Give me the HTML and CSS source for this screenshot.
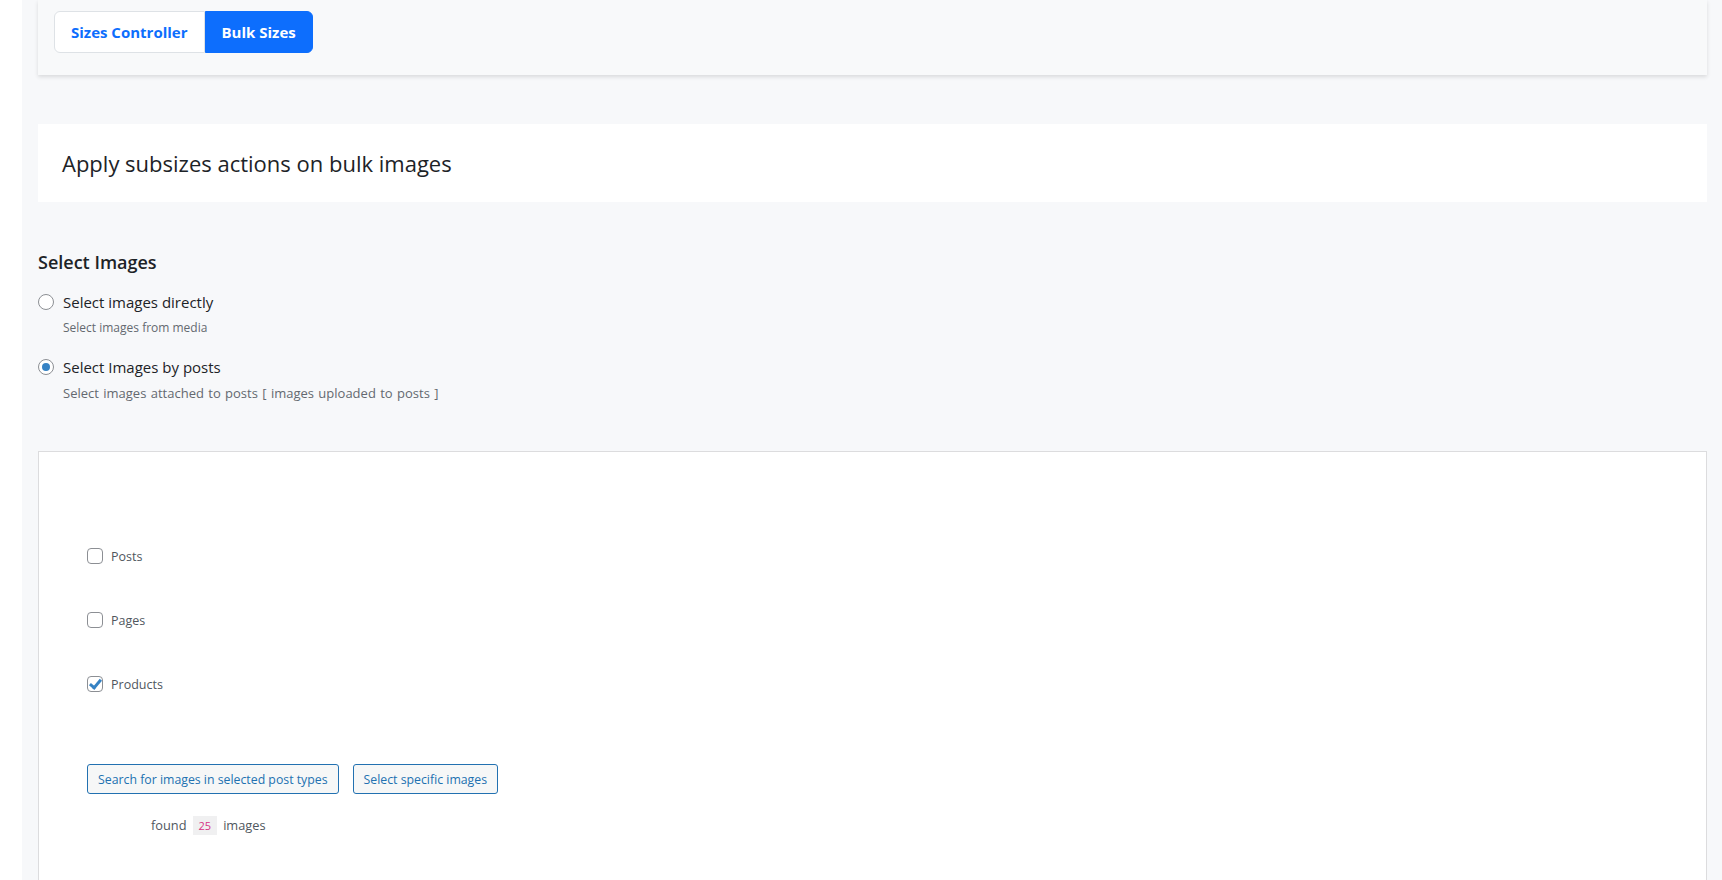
FILE: index.html
```html
<!DOCTYPE html>
<html lang="en">
<head>
    <meta charset="UTF-8">
    <meta name="viewport" content="width=device-width, initial-scale=1.0">
    <title>Bulk Sizes</title>
    <link rel="stylesheet" href="styles.css">
</head>
<body>
    <div class="wrap">
        <div class="topbar">
            <div class="tabs">
                <button class="tab">Sizes Controller</button>
                <button class="tab active">Bulk Sizes</button>
            </div>
        </div>

        <div class="title-card">
            <h2>Apply subsizes actions on bulk images</h2>
        </div>

        <div class="select-images">
            <h3>Select Images</h3>
            <label class="radio-row"><input type="radio" name="source"> Select images directly</label>
            <p class="hint">Select images from media</p>
            <label class="radio-row second"><input type="radio" name="source" checked> Select Images by posts</label>
            <p class="hint wide">Select images attached to posts [ images uploaded to posts ]</p>
        </div>

        <div class="panel">
            <div class="post-types">
                <label class="check"><input type="checkbox"> Posts</label>
                <label class="check"><input type="checkbox"> Pages</label>
                <label class="check"><input type="checkbox" checked> Products</label>
            </div>
            <div class="actions">
                <button class="button">Search for images in selected post types</button>
                <button class="button">Select specific images</button>
            </div>
            <div class="found">found <code>25</code> images</div>
        </div>
    </div>
</body>
</html>
```

FILE: styles.css
```css
body {
    margin: 0;
    background-color: #fff;
    font-family: 'Open Sans', 'Noto Sans', sans-serif;
    color: #1d2327;
}

.wrap {
    margin-left: 22px;
    min-height: 100vh;
    background-color: #f7f8fa;
    padding: 0 15px 0 16px;
    overflow: hidden;
}

.topbar {
    background-color: #f8f9fa;
    padding: 11px 16px 22px;
    box-shadow: 0 2px 4px rgba(0, 0, 0, 0.12);
}

.tabs {
    display: flex;
}

.tab {
    font-family: inherit;
    font-size: 15px;
    font-weight: 700;
    height: 42px;
    padding: 0 16px;
    border: 1px solid #dee2e6;
    background-color: #fff;
    color: #0d6efd;
    border-radius: 6px 0 0 6px;
    cursor: pointer;
}

.tab.active {
    background-color: #0d6efd;
    border-color: #0d6efd;
    color: #fff;
    border-radius: 0 6px 6px 0;
}

.title-card {
    margin-top: 49px;
    background-color: #fff;
    height: 78px;
    display: flex;
    align-items: center;
    padding-left: 24px;
}

.title-card h2 {
    margin: 0;
    font-size: 22px;
    font-weight: 400;
    color: #1d2327;
}

.select-images h3 {
    margin: 48px 0 0;
    font-size: 18px;
    line-height: 24px;
    font-weight: 600;
}

.radio-row {
    display: flex;
    align-items: center;
    gap: 9px;
    height: 22px;
    margin-top: 17px;
    font-size: 15px;
}

.radio-row.second {
    margin-top: 19px;
}

.radio-row input {
    appearance: none;
    margin: 0;
    width: 16px;
    height: 16px;
    border: 1px solid #8c8f94;
    border-radius: 50%;
    background-color: #fff;
    display: flex;
    align-items: center;
    justify-content: center;
}

.radio-row input:checked::before {
    content: '';
    width: 8px;
    height: 8px;
    border-radius: 50%;
    background-color: #3582c4;
}

.hint {
    margin: 6px 0 0 25px;
    font-size: 12px;
    line-height: 18px;
    color: #646970;
}

.hint.wide {
    font-size: 13px;
    word-spacing: 1px;
}

.panel {
    margin-top: 49px;
    background-color: #fff;
    border: 1px solid #dcdcde;
    border-bottom: none;
    padding: 94px 48px 60px;
}

.post-types {
    display: flex;
    flex-direction: column;
    gap: 44px;
}

.check {
    display: flex;
    align-items: center;
    gap: 8px;
    height: 20px;
    font-size: 12.5px;
    color: #50575e;
}

.check input {
    appearance: none;
    margin: 0;
    width: 16px;
    height: 16px;
    border: 1px solid #8c8f94;
    border-radius: 4px;
    background-color: #fff;
    position: relative;
}

.check input:checked::before {
    content: '';
    position: absolute;
    left: 4px;
    top: 0;
    width: 4px;
    height: 9px;
    border: solid #3582c4;
    border-width: 0 3px 3px 0;
    transform: rotate(40deg);
}

.actions {
    display: flex;
    gap: 14px;
    margin-top: 70px;
}

.button {
    font-family: inherit;
    font-size: 12.3px;
    height: 30px;
    padding: 0 10px;
    color: #2271b1;
    border: 1px solid #2271b1;
    background-color: #f6f7f7;
    border-radius: 3px;
    cursor: pointer;
}

.found {
    margin: 21px 0 0 64px;
    height: 20px;
    display: flex;
    align-items: center;
    gap: 6px;
    font-size: 12.8px;
    color: #50575e;
}

.found code {
    font-family: inherit;
    font-size: 11px;
    background-color: #f0f0f1;
    color: #d63384;
    padding: 2px 6px;
}
```
